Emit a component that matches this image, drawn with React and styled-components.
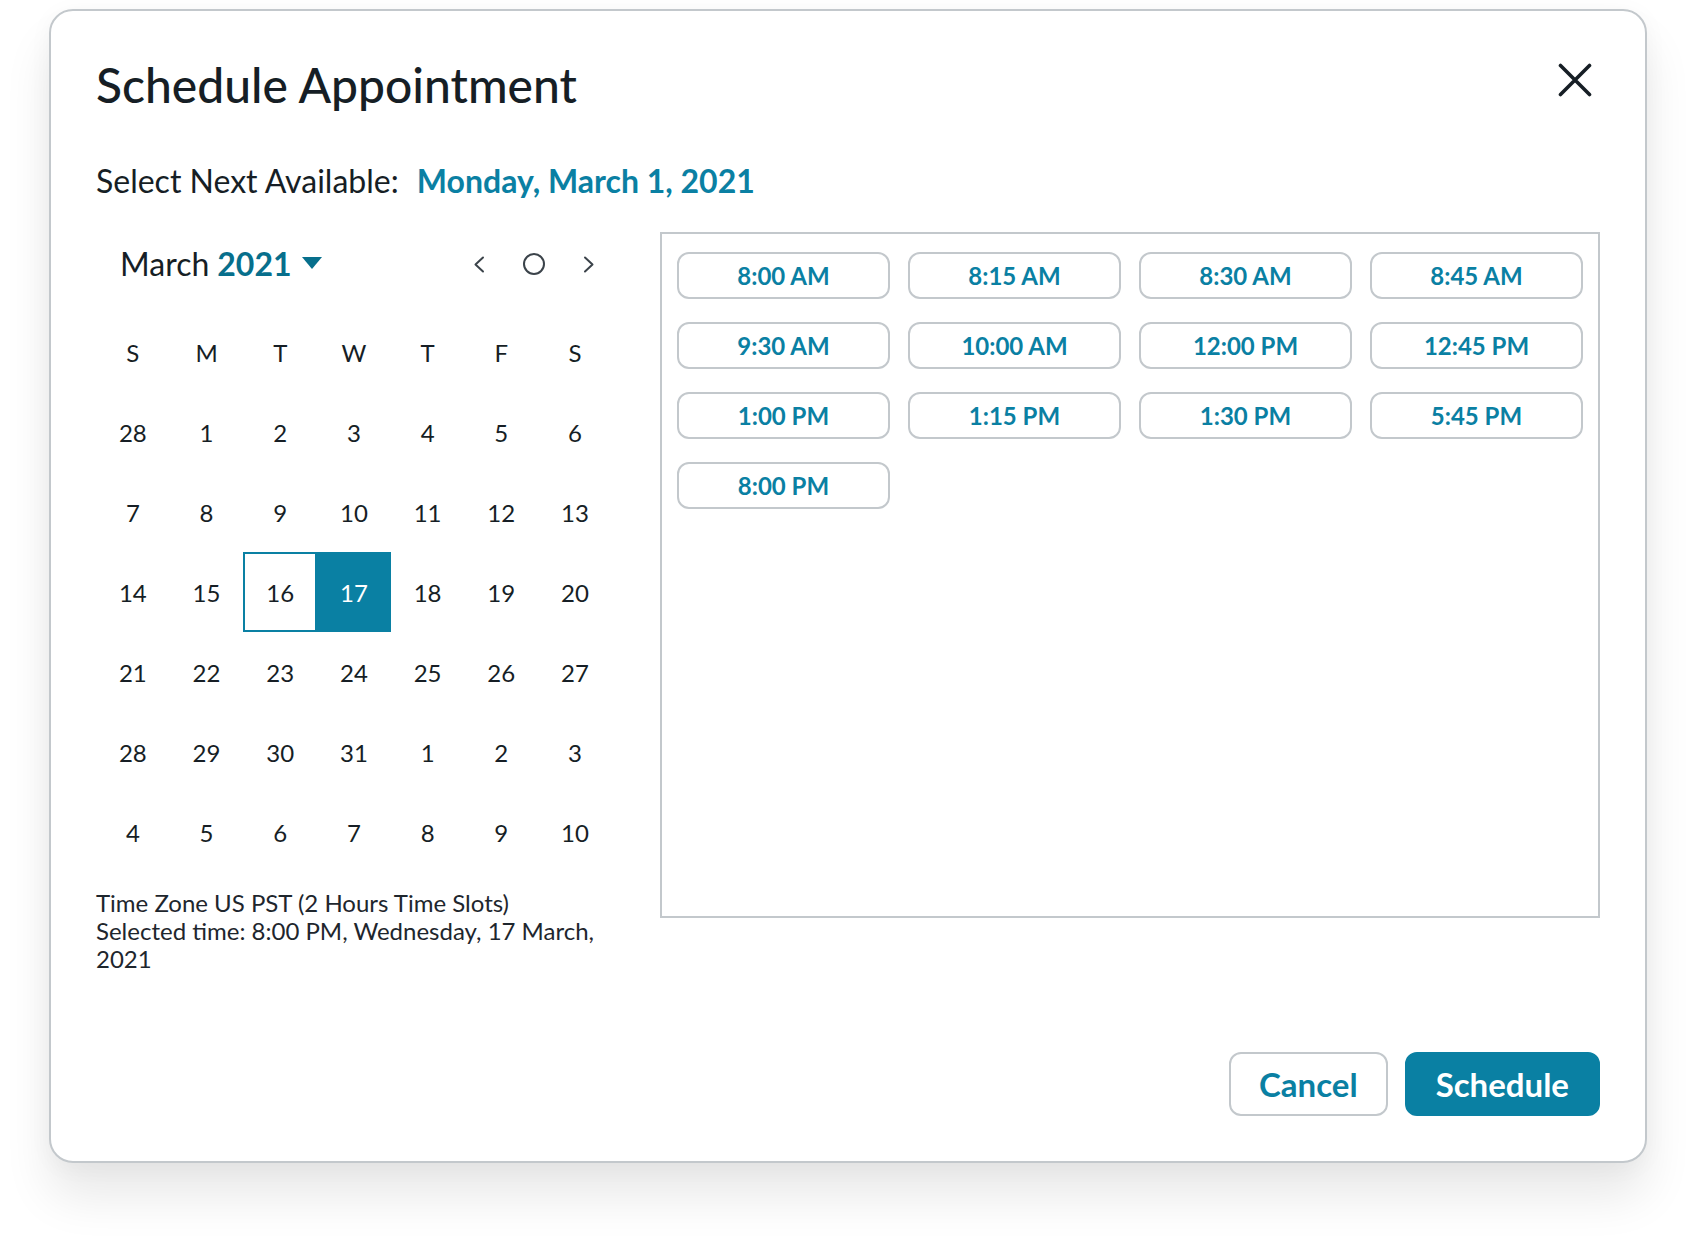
import React from "react"
import styled, { createGlobalStyle } from "styled-components"

const TEAL = "#0a80a3"
const TEAL_DARK = "#076f8c"
const INK = "#161e25"
const LINE = "#c3c8cc"

const GlobalStyle = createGlobalStyle`
  * { box-sizing: border-box; }
  body {
    margin: 0;
    background: #ffffff;
    font-family: Lato, "Open Sans", "Liberation Sans", sans-serif;
    color: ${INK};
  }
`

const Page = styled.div`
  padding: 9px 0 0 49px;
  width: 1696px;
  height: 1252px;
`

const Card = styled.div`
  display: flex;
  flex-direction: column;
  width: 1598px;
  height: 1154px;
  padding: 46px 45px 45px 45px;
  background: #ffffff;
  border: 2px solid ${LINE};
  border-radius: 24px;
  box-shadow: 0 34px 48px rgba(0, 0, 0, 0.09), 0 4px 24px rgba(0, 0, 0, 0.04);
`

const Header = styled.div`
  display: flex;
  justify-content: space-between;
  align-items: flex-start;
`

const Title = styled.h1`
  margin: 0;
  font-size: 48px;
  line-height: 56px;
  font-weight: 500;
  color: ${INK};
`

const CloseButton = styled.button`
  display: flex;
  align-items: center;
  justify-content: center;
  width: 34px;
  height: 34px;
  margin: 6px 8px 0 0;
  padding: 0;
  border: none;
  background: none;
  color: ${INK};
  cursor: pointer;
`

const NextAvailable = styled.div`
  margin-top: 50px;
  font-size: 32px;
  line-height: 36px;
  color: ${INK};

  & > span {
    margin-left: 10px;
    color: ${TEAL};
    font-weight: 700;
  }
`

const Body = styled.div`
  display: flex;
  align-items: flex-start;
  gap: 46px;
  margin-top: 33px;
`

const CalendarColumn = styled.div`
  width: 518px;
  flex-shrink: 0;
`

const MonthBar = styled.div`
  display: flex;
  align-items: center;
  justify-content: space-between;
  height: 64px;
  padding: 0 5px 0 24px;
`

const MonthLabel = styled.div`
  display: flex;
  align-items: center;
  font-size: 32px;
  line-height: 38px;
  color: ${INK};

  & > b {
    margin-left: 8px;
    color: ${TEAL_DARK};
    font-weight: 700;
  }
`

const Caret = styled.span`
  display: inline-block;
  margin: 0 0 2px 10px;
  width: 0;
  height: 0;
  border-left: 10px solid transparent;
  border-right: 10px solid transparent;
  border-top: 12px solid ${TEAL_DARK};
`

const Nav = styled.div`
  display: flex;
  gap: 15px;
`

const NavButton = styled.button`
  display: flex;
  align-items: center;
  justify-content: center;
  width: 40px;
  height: 40px;
  padding: 0;
  border: none;
  background: none;
  color: #3b434a;
  cursor: pointer;
`

const Grid = styled.div`
  display: grid;
  grid-template-columns: repeat(7, 73.7px);
  grid-auto-rows: 80px;
  margin-top: 16px;
`

const Cell = styled.div`
  display: flex;
  align-items: center;
  justify-content: center;
  font-size: 24px;
  color: ${({ $selected }) => ($selected ? "#ffffff" : INK)};
  background: ${({ $selected }) => ($selected ? TEAL : "transparent")};
  border: 2px solid ${({ $today }) => ($today ? TEAL : "transparent")};
`

const Note = styled.div`
  margin-top: 17px;
  font-size: 24px;
  line-height: 28px;
  color: #1e262d;
`

const SlotPanel = styled.div`
  flex: 1;
  height: 686px;
  padding: 18px 15px;
  border: 2px solid ${LINE};
  display: grid;
  grid-template-columns: repeat(4, 1fr);
  grid-auto-rows: 47px;
  column-gap: 18px;
  row-gap: 23px;
  align-content: start;
`

const Slot = styled.button`
  border: 2px solid ${LINE};
  border-radius: 12px;
  background: #ffffff;
  font-family: inherit;
  font-size: 24px;
  font-weight: 700;
  color: ${TEAL};
  cursor: pointer;
`

const Footer = styled.div`
  display: flex;
  justify-content: flex-end;
  gap: 17px;
  margin-top: auto;
`

const ActionButton = styled.button`
  height: 64px;
  padding: 0 ${({ $primary }) => ($primary ? 29 : 28)}px;
  border-radius: 12px;
  border: 2px solid ${({ $primary }) => ($primary ? TEAL : LINE)};
  background: ${({ $primary }) => ($primary ? TEAL : "#ffffff")};
  color: ${({ $primary }) => ($primary ? "#ffffff" : TEAL)};
  font-family: inherit;
  font-size: 33px;
  font-weight: 700;
  cursor: pointer;
`

const weekdays = ["S", "M", "T", "W", "T", "F", "S"]

const days = [
  28, 1, 2, 3, 4, 5, 6,
  7, 8, 9, 10, 11, 12, 13,
  14, 15, 16, 17, 18, 19, 20,
  21, 22, 23, 24, 25, 26, 27,
  28, 29, 30, 31, 1, 2, 3,
  4, 5, 6, 7, 8, 9, 10
]

const slots = [
  "8:00 AM", "8:15 AM", "8:30 AM", "8:45 AM",
  "9:30 AM", "10:00 AM", "12:00 PM", "12:45 PM",
  "1:00 PM", "1:15 PM", "1:30 PM", "5:45 PM",
  "8:00 PM"
]

const App = () => {
  return (
    <Page>
      <GlobalStyle />
      <Card>
        <Header>
          <Title>Schedule Appointment</Title>
          <CloseButton aria-label="Close">
            <svg width="34" height="34" viewBox="0 0 34 34" fill="none" stroke="currentColor" strokeWidth="3.6" strokeLinecap="round">
              <path d="M2.5 2.5 L31.5 31.5 M31.5 2.5 L2.5 31.5" />
            </svg>
          </CloseButton>
        </Header>

        <NextAvailable>
          Select Next Available: <span>Monday, March 1, 2021</span>
        </NextAvailable>

        <Body>
          <CalendarColumn>
            <MonthBar>
              <MonthLabel>
                March<b>2021</b>
                <Caret />
              </MonthLabel>
              <Nav>
                <NavButton aria-label="Previous month">
                  <svg width="12" height="17" viewBox="0 0 12 17" fill="none" stroke="currentColor" strokeWidth="2" strokeLinecap="round" strokeLinejoin="round">
                    <path d="M10 1.5 L2.5 8.5 L10 15.5" />
                  </svg>
                </NavButton>
                <NavButton aria-label="Today">
                  <svg width="24" height="24" viewBox="0 0 24 24" fill="none" stroke="currentColor" strokeWidth="2">
                    <circle cx="12" cy="12" r="10" />
                  </svg>
                </NavButton>
                <NavButton aria-label="Next month">
                  <svg width="12" height="17" viewBox="0 0 12 17" fill="none" stroke="currentColor" strokeWidth="2" strokeLinecap="round" strokeLinejoin="round">
                    <path d="M2 1.5 L9.5 8.5 L2 15.5" />
                  </svg>
                </NavButton>
              </Nav>
            </MonthBar>

            <Grid>
              {weekdays.map((d, i) => (
                <Cell key={"w" + i}>{d}</Cell>
              ))}
              {days.map((d, i) => (
                <Cell key={i} $today={i === 16} $selected={i === 17}>
                  {d}
                </Cell>
              ))}
            </Grid>

            <Note>
              Time Zone US PST (2 Hours Time Slots)
              <br />
              Selected time: 8:00 PM, Wednesday, 17 March, 2021
            </Note>
          </CalendarColumn>

          <SlotPanel>
            {slots.map((s) => (
              <Slot key={s}>{s}</Slot>
            ))}
          </SlotPanel>
        </Body>

        <Footer>
          <ActionButton>Cancel</ActionButton>
          <ActionButton $primary>Schedule</ActionButton>
        </Footer>
      </Card>
    </Page>
  )
}

export default App
